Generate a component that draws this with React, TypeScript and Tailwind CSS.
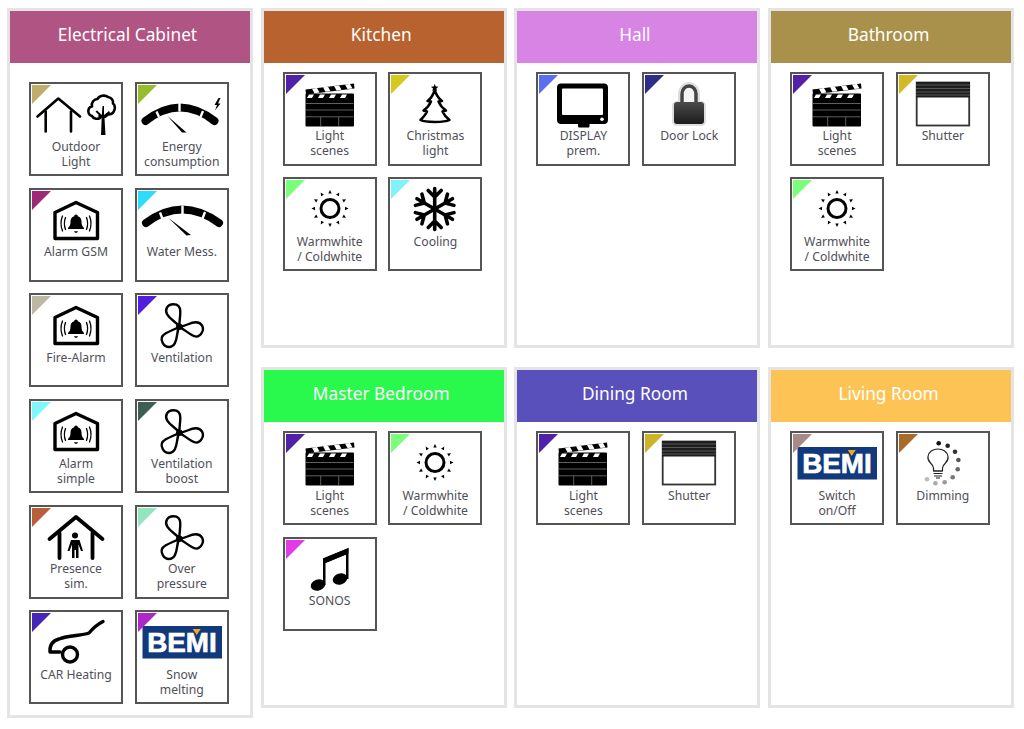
import React from 'react';

const Svg: React.FC<{ children: React.ReactNode }> = ({ children }) => (
    <svg viewBox="0 0 90 55" className="block w-[90px] h-[55px] shrink-0">{children}</svg>
);

const OutdoorIcon = () => (
    <Svg>
        <g fill="none" stroke="#000" strokeWidth="2.600" strokeLinecap="round" strokeLinejoin="round">
            <path d="M6.500 32.500L27.300 14.500L49 32.500" />
            <path d="M14.700 27.500V47.500M40 27.500V47.500" />
            <path d="M69 34c-3 1.500-7 .5-8-2-3-.5-4.500-4-3.300-7 1-2 2.300-2.500 3.300-2.500-1-4 2-7.500 5.500-7.500 1.500-3.500 7.500-4.500 10.500-2 3.500.5 5.500 3.500 5 6.500 2 1.500 2.500 5 1 7.500-1 2.500-4 3.500-6 3.500-2.500 2.500-6 3-8.500 1.500" />
        </g>
        <path d="M70 51L70.700 34L64.500 27.500L66 26.500L70.800 31L71.500 22L73 22L73 31L78 27L79 28.500L73.500 34L74.500 51Z" />
    </Svg>
);

const Gauge: React.FC<{ big?: boolean }> = ({ big }) => (
    <Svg>
        {big ? (
            <g>
                <path d="M9 33Q45 6 82 33" fill="none" stroke="#000" strokeWidth="8" strokeLinecap="round" />
                <path d="M23 22.500L25.500 29M45.500 15.500V24M68 22L65.500 28.500" stroke="#fff" strokeWidth="2.400" />
                <path d="M31.500 28L54 45L49.500 45.500Z" />
            </g>
        ) : (
            <g>
                <path d="M8.500 37Q43 10 77.500 37" fill="none" stroke="#000" strokeWidth="8" strokeLinecap="round" />
                <path d="M19.500 27.500L22 33M42.500 19V27.500M66 27L63.500 33" stroke="#fff" strokeWidth="2.400" />
                <path d="M30.500 32L49.500 48.500L45 48.500Z" />
                <path d="M81.500 14L77.500 21L80 21L78 26.500L83.500 19.500L81 19.500L83.500 14Z" />
            </g>
        )}
    </Svg>
);

const AlarmIcon = () => (
    <Svg>
        <path d="M45 12.500L24 22.500V48.500H66.500V22.500Z" fill="none" stroke="#000" strokeWidth="3.400" strokeLinejoin="round" />
        <path d="M45 24.500c-1 0-1.800.8-1.800 1.700-2.700.8-3.700 3-3.700 5.300 0 3-.5 4.500-2.500 6.500v1h16v-1c-2-2-2.500-3.500-2.500-6.500 0-2.300-1-4.500-3.700-5.300 0-.9-.8-1.700-1.800-1.700Z" />
        <path d="M43 41.300h4l-1 1.400h-2Z" />
        <g fill="none" stroke="#000" strokeWidth="1.300" strokeLinecap="round">
            <path d="M34.500 27.500c-1.500 4-1.500 8 0 12M31.500 26c-2 5-2 10 0 15" />
            <path d="M55.500 27.500c1.500 4 1.500 8 0 12M58.500 26c2 5 2 10 0 15" />
        </g>
    </Svg>
);

const petal = 'M0 0C-3-5-9-7-12-12C-15-17-12-22.500-6-22.500C-1-22.500 1-20 1-15C1-10 0-5 0 0Z';

const FanIcon = () => (
    <Svg>
        <g transform="translate(42.300 31.700)">
            <g fill="none" stroke="#000" strokeWidth="2.400" strokeLinejoin="round">
                <path d={petal} />
                <path d={petal} transform="rotate(120)" />
                <path d={petal} transform="rotate(240)" />
            </g>
            <circle r="3.300" />
        </g>
    </Svg>
);

const PresenceIcon = () => (
    <Svg>
        <g fill="none" stroke="#000" strokeWidth="3.800" strokeLinecap="round" strokeLinejoin="round">
            <path d="M18.500 32L45 10L71.500 32" />
            <path d="M28.500 26V51M61.500 26V51" />
        </g>
        <circle cx="44" cy="28.500" r="3" />
        <path d="M40 33H48.500L52 44H50L47.500 37.500V51H45V43H43.500V51H41V37.500L38.500 44H36.500Z" />
    </Svg>
);

const CarIcon = () => (
    <Svg>
        <g fill="none" stroke="#000" strokeWidth="3.400" strokeLinecap="round" strokeLinejoin="round">
            <path d="M72 9.500C67 12 63 15 58 21C50 24 38 23 28 27C21 29 18.500 33 19 40L29 40" />
            <circle cx="39" cy="42.500" r="7.500" />
        </g>
    </Svg>
);

const BemiIcon = () => (
    <Svg>
        <rect x="5.500" y="14" width="79.500" height="32.500" fill="#12397c" />
        <text
            x="45"
            y="40.300"
            textAnchor="middle"
            textLength="69.500"
            lengthAdjust="spacingAndGlyphs"
            fontFamily="Liberation Sans, sans-serif"
            fontWeight="700"
            fontSize="28"
            fill="#fff"
            stroke="#fff"
            strokeWidth=".7"
        >
            BEMI
        </text>
        <path d="M55.700 17H63.700L59.700 23Z" fill="#f1aa1c" />
    </Svg>
);

const ClapperIcon = () => (
    <Svg>
        <rect x="20.500" y="19.500" width="48.500" height="33" rx="1" />
        <path d="M20.500 15.500L69 9.500L69.500 14.500L21 20.500Z" />
        <g fill="#fff">
            <path d="M27 14.700L32 14L34.500 18.500L29.500 19.200Z" />
            <path d="M38 13.300L43 12.700L45.500 17.200L40.500 17.800Z" />
            <path d="M49 12L54 11.400L56.500 15.800L51.500 16.500Z" />
            <path d="M60 10.600L65 10L67.500 14.400L62.500 15.100Z" />
            <path d="M24 20.500H29L27 24H22Z" />
            <path d="M35 20.500H40L38 24H33Z" />
            <path d="M46 20.500H51L49 24H44Z" />
            <path d="M57 20.500H62L60 24H55Z" />
        </g>
        <g stroke="#6a6a6a" strokeWidth=".9">
            <path d="M21 29.500H68.500M21 36H68.500M21 42.800H68.500M35.700 43V52M53.700 43V52" />
        </g>
    </Svg>
);

const TreeIcon = () => (
    <Svg>
        <path
            d="M44.700 16.500C43 21 40.500 25 37.500 27L41 27.500C39.500 31 36.500 34.500 33.500 36.500L37 37.500C35.500 41 32.500 44 30.500 46C35 48.500 54.500 48.500 59.500 46C57 44 54 41 52.500 37.500L56 36.500C53 34.500 50 31 48.500 27.500L52 27C49 25 46.500 21 44.700 16.500Z"
            fill="none"
            stroke="#000"
            strokeWidth="2.500"
            strokeLinejoin="round"
        />
        <path d="M44.700 10L45.800 12.600L48.500 12.800L46.400 14.600L47.100 17.200L44.700 15.800L42.300 17.200L43 14.600L40.900 12.800L43.600 12.600Z" />
    </Svg>
);

const SunIcon = () => (
    <Svg>
        <g transform="translate(45 29.500)">
            <circle r="9" fill="none" stroke="#000" strokeWidth="3" />
            {[0, 30, 60, 90, 120, 150, 180, 210, 240, 270, 300, 330].map((a) => (
                <path key={a} d="M-1.700-15H1.700L0-18.500Z" transform={`rotate(${a})`} />
            ))}
        </g>
    </Svg>
);

const SnowIcon = () => (
    <Svg>
        <g transform="translate(44.700 30)" fill="none" stroke="#000" strokeWidth="3.600" strokeLinecap="round" strokeLinejoin="round">
            {[0, 60, 120, 180, 240, 300].map((a) => (
                <path key={a} d="M0 0V-20.500M-6.500-18.500L0-12L6.500-18.500" transform={`rotate(${a})`} />
            ))}
        </g>
    </Svg>
);

const DisplayIcon = () => (
    <Svg>
        <path
            fillRule="evenodd"
            d="M23 9.500H66C68.500 9.500 70 11 70 13.500V46C70 48.500 68.500 50 66 50H23C20.500 50 19 48.500 19 46V13.500C19 11 20.500 9.500 23 9.500ZM25 14.500C24.500 14.500 24 15 24 15.500V40C24 40.500 24.500 41 25 41H64C64.500 41 65 40.500 65 40V15.500C65 15 64.500 14.500 64 14.500Z"
        />
        <path d="M40 50H51.500V52C51.500 53 51 53.500 50 53.500H41.500C40.500 53.500 40 53 40 52Z" />
        <circle cx="64" cy="45.300" r="1.800" fill="#fff" />
    </Svg>
);

const LockIcon = () => (
    <Svg>
        <defs>
            <linearGradient id="lockBody" x1="0" y1="0" x2="0" y2="1">
                <stop offset="0" stopColor="#4a4a4a" />
                <stop offset="1" stopColor="#1c1c1c" />
            </linearGradient>
        </defs>
        <path d="M34 27V20C34 13 39 8 45 8C51 8 56 13 56 20V27C60 27 62 29 62 32V47C62 50 60 52 57 52H33C30 52 28 50 28 47V32C28 29 30 27 34 27Z" fill="#dedede" />
        <path d="M38 29V20C38 15.500 41 12 45 12C49 12 52 15.500 52 20V29" fill="none" stroke="#444" strokeWidth="3.400" />
        <path d="M40 28V20C40 17 42 14 45 14C48 14 50 17 50 20V28Z" fill="#f4f4f4" />
        <rect x="30" y="28" width="30" height="22" rx="3" fill="url(#lockBody)" />
    </Svg>
);

const ShutterIcon = () => (
    <Svg>
        <rect x="18.700" y="8.500" width="52.500" height="43" fill="#fff" stroke="#333" strokeWidth="1.800" />
        <rect x="18" y="8" width="54" height="15.500" fill="#1d1d1d" />
        <path d="M18 11H72M18 14.500H72M18 18H72M18 21H72" stroke="#666" strokeWidth=".8" />
    </Svg>
);

const MusicIcon = () => (
    <Svg>
        <ellipse cx="33" cy="46" rx="7.500" ry="5.500" transform="rotate(-18 33 46)" />
        <ellipse cx="55" cy="40" rx="7.500" ry="5.500" transform="rotate(-18 55 40)" />
        <path d="M38 46V19.500L63.500 9V40H61V15.500L40.500 24V46Z" />
        <path d="M38 19.500L63.500 9V14.500L38 25Z" />
    </Svg>
);

const dots = [
    [40.7, 10.3, '#111'],
    [49.7, 12.7, '#222'],
    [57, 18.7, '#333'],
    [60.4, 27, '#555'],
    [59.7, 36.3, '#666'],
    [54.7, 44.3, '#777'],
    [46.7, 49.3, '#999'],
    [37.4, 50.3, '#aaa'],
    [29, 46.3, '#bbb'],
] as const;

const DimIcon = () => (
    <Svg>
        {dots.map(([cx, cy, c]) => (
            <circle key={cx} cx={cx} cy={cy} r="2.300" fill={c} />
        ))}
        <g fill="none" stroke="#222" strokeWidth="1.200" strokeLinejoin="round">
            <path d="M35.500 38V35C35.500 33 34 31.500 32.500 30C30.500 28 29.500 26 30 23.500C30.500 19 35 16 40 16C45 16 49.500 19 50 23.500C50.500 26 49.500 28 47.500 30C46 31.500 44.500 33 44.500 35V38Z" />
            <path d="M35.500 38H44.500M35.500 40.500H44.500M36 43H44M38 45H42" />
        </g>
    </Svg>
);

type Item = { label: React.ReactNode; corner: string; icon: React.ReactNode };

const Tile: React.FC<Item> = ({ label, corner, icon }) => (
    <div className="relative w-[94px] h-[94px] border-2 border-[#555] bg-white flex flex-col items-center">
        <span className={`absolute left-px top-px w-0 h-0 border-t-[19px] border-r-[19px] border-r-transparent ${corner}`} />
        {icon}
        <p className="-mt-[0.400px] text-[12.200px] leading-[15px] text-center text-[#4f4f58] whitespace-nowrap">{label}</p>
    </div>
);

const Panel: React.FC<{ title: string; header: string; top: string; items: Item[]; className: string }> = ({
    title,
    header,
    top,
    items,
    className,
}) => (
    <section className={`border-[3px] border-[#e4e4e4] bg-white ${className}`}>
        <h2 className={`h-[52px] flex items-center justify-center pb-[4px] pr-[5px] text-[17.300px] text-white ${header}`}>{title}</h2>
        <div className={`flex flex-wrap content-start gap-x-[11.800px] gap-y-[11.700px] pl-[19px] ${top}`}>
            {items.map((item, i) => (
                <Tile key={i} {...item} />
            ))}
        </div>
    </section>
);

const scenes = (): Item => ({
    label: <>Light<br />scenes</>,
    corner: 'border-t-[#4f22a8]',
    icon: <ClapperIcon />,
});

const warm = (): Item => ({
    label: <>Warmwhite<br />/ Coldwhite</>,
    corner: 'border-t-[#7bff7b]',
    icon: <SunIcon />,
});

const cabinet: Item[] = [
    { label: <>Outdoor<br />Light</>, corner: 'border-t-[#bfae6b]', icon: <OutdoorIcon /> },
    { label: <>Energy<br />consumption</>, corner: 'border-t-[#97bd2e]', icon: <Gauge /> },
    { label: 'Alarm GSM', corner: 'border-t-[#9c2a78]', icon: <AlarmIcon /> },
    { label: 'Water Mess.', corner: 'border-t-[#2bdcfb]', icon: <Gauge big /> },
    { label: 'Fire-Alarm', corner: 'border-t-[#bdb8a3]', icon: <AlarmIcon /> },
    { label: 'Ventilation', corner: 'border-t-[#4f1ee0]', icon: <FanIcon /> },
    { label: <>Alarm<br />simple</>, corner: 'border-t-[#7ff7fb]', icon: <AlarmIcon /> },
    { label: <>Ventilation<br />boost</>, corner: 'border-t-[#3b5f50]', icon: <FanIcon /> },
    { label: <>Presence<br />sim.</>, corner: 'border-t-[#b9603a]', icon: <PresenceIcon /> },
    { label: <>Over<br />pressure</>, corner: 'border-t-[#93e5c0]', icon: <FanIcon /> },
    { label: 'CAR Heating', corner: 'border-t-[#4527b5]', icon: <CarIcon /> },
    { label: <>Snow<br />melting</>, corner: 'border-t-[#ae28c8]', icon: <BemiIcon /> },
];

const App: React.FC = () => (
    <div className="w-[1024px] h-[729px] bg-white flex gap-[7.700px] pl-[7px] pt-[7.500px] font-['Noto_Sans',sans-serif]">
        <Panel
            title="Electrical Cabinet"
            header="bg-[#b05484]"
            top="pt-[19.500px]"
            className="w-[246px] h-[710.500px] shrink-0"
            items={cabinet}
        />
        <div className="grid grid-cols-[246px_246px_246px] grid-rows-[340.500px_341px] gap-x-[7.700px] gap-y-[19px]">
            <Panel
                title="Kitchen"
                header="bg-[#b8622f]"
                top="pt-[9px]"
                className=""
                items={[
                    scenes(),
                    { label: <>Christmas<br />light</>, corner: 'border-t-[#d5c91e]', icon: <TreeIcon /> },
                    warm(),
                    { label: 'Cooling', corner: 'border-t-[#7ff2fb]', icon: <SnowIcon /> },
                ]}
            />
            <Panel
                title="Hall"
                header="bg-[#d884e4]"
                top="pt-[9px]"
                className=""
                items={[
                    { label: <>DISPLAY<br />prem.</>, corner: 'border-t-[#5a6ff0]', icon: <DisplayIcon /> },
                    { label: 'Door Lock', corner: 'border-t-[#2d2d8a]', icon: <LockIcon /> },
                ]}
            />
            <Panel
                title="Bathroom"
                header="bg-[#aa914b]"
                top="pt-[9px]"
                className=""
                items={[
                    scenes(),
                    { label: 'Shutter', corner: 'border-t-[#d4b826]', icon: <ShutterIcon /> },
                    warm(),
                ]}
            />
            <Panel
                title="Master Bedroom"
                header="bg-[#29f94d]"
                top="pt-[9px]"
                className=""
                items={[
                    scenes(),
                    warm(),
                    { label: 'SONOS', corner: 'border-t-[#e23ae8]', icon: <MusicIcon /> },
                ]}
            />
            <Panel
                title="Dining Room"
                header="bg-[#5a50bc]"
                top="pt-[9px]"
                className=""
                items={[scenes(), { label: 'Shutter', corner: 'border-t-[#ccb32a]', icon: <ShutterIcon /> }]}
            />
            <Panel
                title="Living Room"
                header="bg-[#fec355]"
                top="pt-[9px]"
                className=""
                items={[
                    { label: <>Switch<br />on/Off</>, corner: 'border-t-[#a88a86]', icon: <BemiIcon /> },
                    { label: 'Dimming', corner: 'border-t-[#ac6a2a]', icon: <DimIcon /> },
                ]}
            />
        </div>
    </div>
);

export default App;
